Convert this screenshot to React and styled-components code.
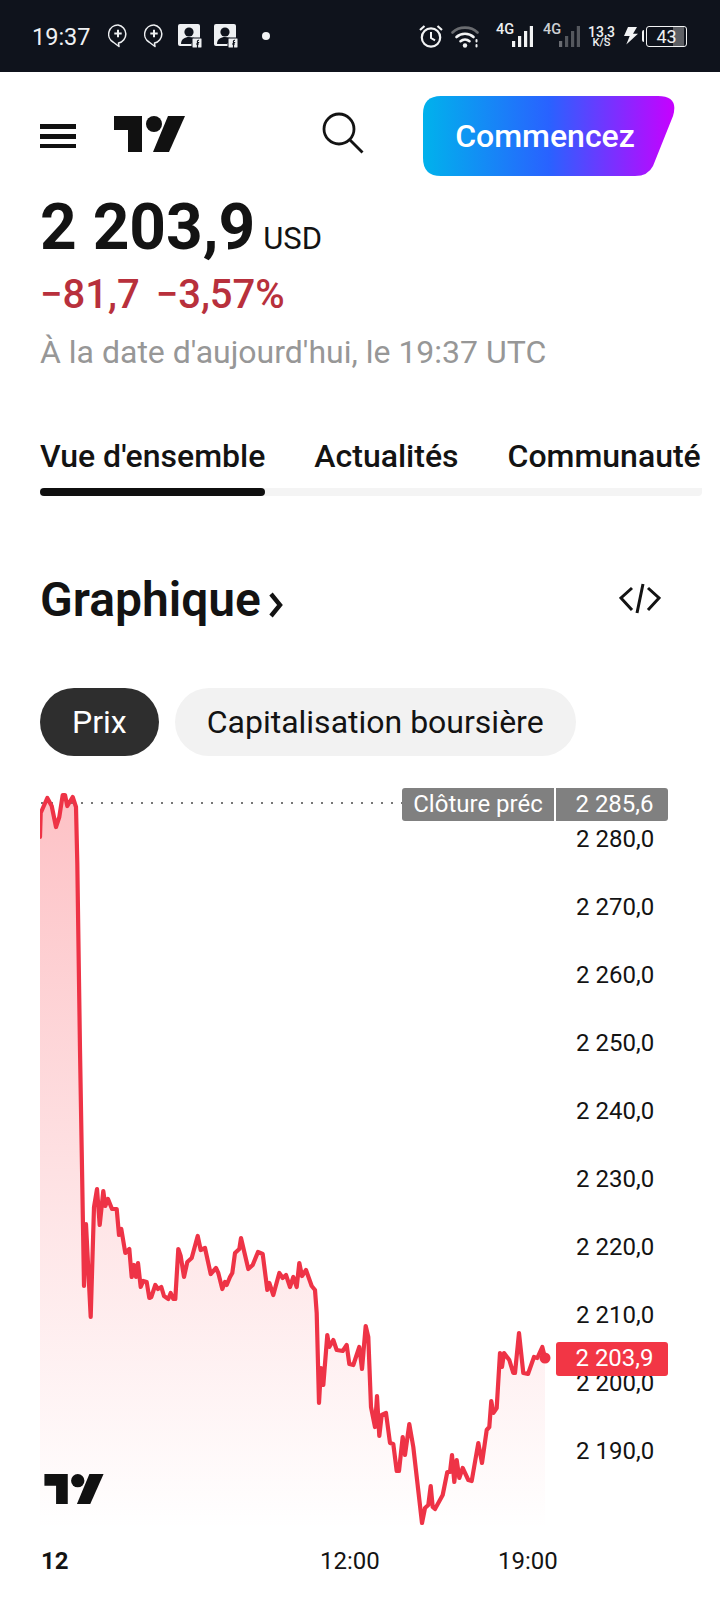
import styled, { createGlobalStyle } from 'styled-components';

const GlobalStyle = createGlobalStyle`
  html, body {
    margin: 0;
    padding: 0;
    background: #fff;
    overflow: hidden;
  }
  body {
    font-family: Roboto, "Liberation Sans", sans-serif;
    color: #131313;
  }
`;

const Page = styled.div`
  width: 720px;
  height: 1611px;
  overflow: hidden;
  background: #fff;
`;

/* status bar */
const StatusBar = styled.div`
  height: 72px;
  box-sizing: border-box;
  padding: 0 33px 0 32px;
  background: #0f131c;
  color: #eef0f2;
  display: flex;
  align-items: center;
  justify-content: space-between;
`;

const StatusGroup = styled.div`
  display: flex;
  align-items: center;
  gap: ${props => props.$gap || 0}px;
  margin-left: ${props => props.$ml || 0}px;
`;

const Time = styled.span`
  font-size: 23.5px;
  line-height: 24px;
  margin-top: 2px;
`;

const NetBlock = styled.div`
  position: relative;
  width: 37px;
  height: 22px;
  display: flex;
  justify-content: flex-end;
  align-items: flex-end;
`;

const NetLabel = styled.span`
  position: absolute;
  left: 0;
  top: -2px;
  font-size: 14.5px;
  line-height: 14px;
  font-weight: 500;
  opacity: ${props => props.$dim ? 0.85 : 1};
`;

const Speed = styled.div`
  width: 27px;
  display: flex;
  flex-direction: column;
  align-items: center;
  font-weight: 500;
  font-size: 14px;
  line-height: 12px;
  white-space: nowrap;
`;

const SpeedUnit = styled.span`
  font-size: 11px;
  line-height: 9px;
`;

const Battery = styled.div`
  position: relative;
  width: 41px;
  height: 21px;
  box-sizing: border-box;
  margin-left: 8px;
  border: 1.5px solid #f2f3f4;
  border-radius: 3px;
  font-size: 18px;
  line-height: 19px;
  text-align: center;
  background: linear-gradient(90deg, transparent 66%, #5d5f64 66%, #5d5f64 94%, transparent 94%);

  &::before {
    content: '';
    position: absolute;
    left: -5px;
    top: 3px;
    width: 2px;
    height: 12px;
    background: #f2f3f4;
    border-radius: 2px 0 0 2px;
  }
`;

/* top navigation */
const Header = styled.header`
  height: 118px;
  box-sizing: border-box;
  padding: 24px 45px 14px 40px;
  display: flex;
  align-items: center;
`;

const MenuIcon = styled.svg`
  width: 36px;
  height: 24px;
  margin-right: 38px;
  flex: none;
`;

const SearchIcon = styled.svg`
  width: 42px;
  height: 42px;
  margin: 0 59px 6px 137px;
  flex: none;
`;

const StartButton = styled.button`
  width: 252px;
  height: 80px;
  flex: none;
  border: 0;
  padding: 0 8px 0 0;
  background: linear-gradient(90deg, #00b2ec 0%, #2962ff 50%, #c800ff 100%);
  clip-path: path('M18 0 H235 Q256 0 250 20 L230 70 Q225 80 212 80 H18 Q0 80 0 62 V18 Q0 0 18 0 Z');
  color: #fff;
  font-family: Roboto, sans-serif;
  font-size: 32px;
  font-weight: 500;
`;

/* price block */
const Quote = styled.section`
  padding: 6px 0 0 40px;
`;

const PriceRow = styled.div`
  display: flex;
  align-items: baseline;
  gap: 8px;
  height: 64px;
  line-height: 64px;
`;

const Price = styled.span`
  font-size: 64px;
  font-weight: 700;
`;

const Currency = styled.span`
  font-size: 31px;
`;

const ChangeRow = styled.div`
  display: flex;
  gap: 16px;
  margin-top: 13px;
  font-size: 40px;
  line-height: 44px;
  font-weight: 500;
  color: #b8303c;
`;

const AsOf = styled.div`
  margin-top: 15px;
  font-size: 32px;
  line-height: 40px;
  color: #979797;
`;

/* tabs */
const TabRow = styled.nav`
  display: flex;
  gap: 49px;
  margin: 64px 18px 0 40px;
  border-bottom: 8px solid #f4f4f4;
  border-radius: 0 4px 4px 0;
`;

const Tab = styled.span`
  position: relative;
  padding-bottom: 12px;
  font-size: 32px;
  line-height: 40px;
  font-weight: 500;
  white-space: nowrap;

  &::after {
    content: '';
    display: ${props => props.$active ? 'block' : 'none'};
    position: absolute;
    left: 0;
    right: 0;
    bottom: -8px;
    height: 8px;
    border-radius: 4px;
    background: #0f0f0f;
  }
`;

/* chart section */
const SectionHead = styled.div`
  display: flex;
  align-items: center;
  margin: 78px 40px 0 40px;
  height: 52px;
`;

const SectionTitle = styled.h2`
  margin: 0;
  font-size: 48px;
  line-height: 52px;
  font-weight: 600;
`;

const TitleChevron = styled.svg`
  width: 16px;
  height: 26px;
  margin: 9px 0 0 7px;
`;

const EmbedIcon = styled.svg`
  width: 42px;
  height: 34px;
  margin-left: auto;
  margin-right: 19px;
  margin-bottom: 2px;
`;

const Pills = styled.div`
  display: flex;
  gap: 16px;
  margin: 62px 0 0 40px;
`;

const Pill = styled.span`
  height: 68px;
  box-sizing: border-box;
  padding: 0 32px;
  border-radius: 34px;
  display: flex;
  align-items: center;
  font-size: 32px;
  color: ${props => props.$active ? '#fff' : '#131313'};
  background: ${props => props.$active ? '#2e2e2e' : '#f2f2f2'};
`;

const Chart = styled.div`
  position: relative;
  margin: 32px 0 0 40px;
  width: 628px;
  display: grid;
  grid-template-columns: 516px 1fr;
`;

const Plot = styled.svg`
  width: 516px;
  height: 750px;
  display: block;
`;

const PriceAxis = styled.div`
  padding: 17px 0 0 20px;
  display: flex;
  flex-direction: column;
`;

const AxisValue = styled.span`
  height: 68px;
  line-height: 68px;
  font-size: 24px;
  white-space: nowrap;
`;

const BadgeRow = styled.div`
  position: absolute;
  top: 0;
  right: 0;
  display: flex;
  gap: 2px;
`;

const Badge = styled.span`
  height: 33px;
  line-height: 32px;
  box-sizing: border-box;
  width: ${props => props.$w}px;
  padding-left: ${props => props.$pad || 0}px;
  text-align: center;
  font-size: 24px;
  color: #fff;
  background: ${props => props.$bg};
  border-radius: ${props => props.$radius || '3px'};
`;

const LastBadge = styled(Badge)`
  position: absolute;
  top: 554px;
  right: 0;
  height: 34px;
`;

const ChartLogo = styled.svg`
  position: absolute;
  left: 4px;
  top: 686px;
  width: 60px;
  height: 30px;
`;

const TimeAxis = styled.div`
  display: grid;
  grid-template-columns: 279px 178px auto;
  margin: 7px 0 0 41px;
  font-size: 24px;
  line-height: 32px;
`;

const TimeLabel = styled.span`
  font-weight: ${props => props.$strong ? 700 : 400};
`;

const LINE = [
  [40, 837], [40.7, 813], [47.3, 798], [51.7, 806], [56, 827], [59.3, 817], [62.7, 795], [65, 795], [67.3, 806], [72.7, 797], [76, 807], [77.3, 863], [80, 1050],
  [81.7, 1150], [84, 1286], [86, 1224], [90.7, 1317], [94, 1207], [97, 1189], [99.7, 1225], [103.3, 1191], [105.3, 1206], [108, 1199], [112, 1209], [116.7, 1209],
  [119, 1235], [121.3, 1229], [125.3, 1253], [129.3, 1249], [131.7, 1277], [134, 1265], [136, 1277], [138, 1263], [140.7, 1287], [143.3, 1281], [146.7, 1282],
  [149.3, 1298], [151.3, 1297], [155.3, 1285], [158, 1289], [161.3, 1287], [164, 1296], [168.3, 1299], [170.7, 1293], [173.3, 1299], [175.3, 1299], [178.3, 1249],
  [180.7, 1256], [184, 1277], [187.3, 1262], [191.7, 1258], [197.7, 1236], [200.7, 1250], [205, 1248], [210.7, 1274], [216, 1268], [218.3, 1273], [222.3, 1289],
  [225, 1282], [226.7, 1285], [230, 1277], [232.3, 1273], [235, 1253], [239.3, 1249], [241, 1238], [248.3, 1269], [252.7, 1265], [258, 1252], [262.7, 1254],
  [267.3, 1290], [269.3, 1283], [273.3, 1295], [279.3, 1273], [282.7, 1278], [286, 1275], [290, 1287], [293.3, 1277], [296.7, 1287], [299.3, 1263], [302, 1276],
  [306, 1270], [311.7, 1286], [315, 1290], [316.7, 1313], [319, 1403], [321, 1368], [323.3, 1385], [327.3, 1335], [329.3, 1347], [333.3, 1340], [336.7, 1350],
  [342.7, 1351], [346.7, 1345], [349.3, 1364], [353.3, 1365], [359.3, 1347], [362, 1369], [365.7, 1326], [368.3, 1337], [371, 1407], [375, 1427], [377, 1396],
  [379.3, 1436], [381.7, 1415], [386, 1413], [390, 1443], [393.3, 1444], [396.7, 1471], [399, 1471], [402.7, 1437], [405, 1455], [409.3, 1424], [413.3, 1447],
  [422, 1523], [425, 1508], [428.3, 1505], [430.7, 1486], [432.7, 1507], [435, 1509], [442.7, 1495], [447.3, 1472], [450, 1472], [452, 1455], [454.3, 1482],
  [456.7, 1460], [459.3, 1478], [462.7, 1468], [468.3, 1480], [471.7, 1481], [478.3, 1443], [482, 1463], [486.7, 1430], [489.3, 1427], [491.3, 1401], [493.3, 1413],
  [496.7, 1408], [500, 1353], [502, 1367], [504, 1353], [509.3, 1360], [513.3, 1373], [515, 1373], [519, 1333], [523.3, 1373], [528, 1374], [534, 1357],
  [537.3, 1358], [542.3, 1347], [545, 1358],
];

const linePoints = LINE.map(p => p.join(',')).join(' ');
const areaPoints = `40,1530 ${linePoints} 545,1530`;

const AXIS = ['2 280,0', '2 270,0', '2 260,0', '2 250,0', '2 240,0', '2 230,0', '2 220,0', '2 210,0', '2 200,0', '2 190,0'];

const TvLogo = (props) => (
  <svg viewBox="0 4 35.5 18" fill="#111" {...props}>
    <path d="M14 22H7V11H0V4h14v18Z" />
    <path d="M27.5 22h-8L27 4h8.5L27.5 22Z" />
    <circle cx="20" cy="8" r="4" />
  </svg>
);

const HeaderLogo = styled(TvLogo)`
  width: 71px;
  height: 36px;
  margin-bottom: 4px;
  flex: none;
`;

const ChatPlus = () => (
  <svg width="20" height="24" viewBox="0 0 20 24" fill="none" stroke="#eef0f2" strokeWidth="1.5">
    <path d="M10 1a9.2 9.2 0 0 0-5 17l6 4.5-.5-3.4A9.2 9.2 0 0 0 10 1Z" strokeLinejoin="round" />
    <path d="M10 5.8v7.4M6.3 9.5h7.4" strokeWidth="2" />
  </svg>
);

const FbContact = () => (
  <svg width="24" height="24" viewBox="0 0 24 24">
    <rect x="0" y="0" width="22" height="22" rx="2" fill="#eef0f2" />
    <circle cx="11" cy="8" r="4.6" fill="#0f131c" />
    <path d="M3 20c0-5 4-7 8-7s6 1 7 2l-5 5Z" fill="#0f131c" />
    <rect x="14" y="14" width="10" height="10" rx="1" fill="#eef0f2" stroke="#0f131c" />
    <path d="M19.5 24v-5.5h1.7M18 20h3M21 16.3c-1.2-.3-1.6.4-1.6 1.6" stroke="#0f131c" strokeWidth="1.2" fill="none" />
  </svg>
);

const Signal = ({ dim }) => {
  const on = dim ? '#55585e' : '#f2f3f4';
  return (
    <svg width="21" height="21" viewBox="0 0 21 21" fill={on}>
      <rect x="0" y="15" width="3.2" height="6" fill="#f2f3f4" opacity={dim ? 0.4 : 1} />
      <rect x="6" y="10" width="3.2" height="11" />
      <rect x="12" y="5" width="3.2" height="16" />
      <rect x="17.8" y="0" width="3.2" height="21" />
    </svg>
  );
};

export default function App() {
  return (
    <Page>
      <GlobalStyle />
      <StatusBar>
        <StatusGroup>
          <Time>19:37</Time>
          <StatusGroup $gap={16} $ml={17}>
            <ChatPlus />
            <ChatPlus />
          </StatusGroup>
          <StatusGroup $gap={12} $ml={14}>
            <FbContact />
            <FbContact />
          </StatusGroup>
          <StatusGroup $ml={24}>
            <svg width="8" height="8" viewBox="0 0 8 8"><circle cx="4" cy="4" r="4" fill="#f2f3f4" /></svg>
          </StatusGroup>
        </StatusGroup>
        <StatusGroup>
          <svg width="24" height="24" viewBox="0 0 24 24" fill="none" stroke="#f2f3f4" strokeWidth="2.2">
            <circle cx="12" cy="13.5" r="9.2" />
            <path d="M12 8v6l4 2.4" strokeWidth="2" />
            <path d="M1 6l4.5-4M23 6l-4.5-4" strokeWidth="2.2" />
          </svg>
          <StatusGroup $ml={8}>
            <svg width="29" height="23" viewBox="0 0 29 23" fill="none" strokeWidth="2.6" strokeLinecap="round">
              <path d="M1.5 7.5C8 1 20 1 26.5 7.5" stroke="#6a6c70" />
              <path d="M5.5 12C10 7.6 18 7.6 22.5 12" stroke="#f2f3f4" />
              <path d="M9.5 16.2c2.6-2.2 6.4-2.2 9 0" stroke="#f2f3f4" />
              <circle cx="14" cy="20.5" r="2.2" fill="#f2f3f4" stroke="none" />
              <path d="M25.5 15v1.5M25.5 20v1.5" stroke="#f2f3f4" strokeWidth="2" />
            </svg>
          </StatusGroup>
          <StatusGroup $ml={16}>
            <NetBlock>
              <NetLabel>4G</NetLabel>
              <Signal />
            </NetBlock>
          </StatusGroup>
          <StatusGroup $ml={10}>
            <NetBlock>
              <NetLabel $dim>4G</NetLabel>
              <Signal dim />
            </NetBlock>
          </StatusGroup>
          <StatusGroup $ml={8}>
            <Speed>
              <span>13,3</span>
              <SpeedUnit>K/S</SpeedUnit>
            </Speed>
          </StatusGroup>
          <StatusGroup $ml={9}>
            <svg width="14" height="18" viewBox="0 0 14 18" fill="#f2f3f4">
              <path d="M4 0h9L9 6.7h5L2.3 17.5 5.7 9H0Z" />
            </svg>
          </StatusGroup>
          <Battery>43</Battery>
        </StatusGroup>
      </StatusBar>

      <Header>
        <MenuIcon viewBox="0 0 36 24" fill="#111">
          <rect y="0" width="36" height="5" />
          <rect y="10" width="36" height="5" />
          <rect y="20" width="36" height="4" />
        </MenuIcon>
        <HeaderLogo />
        <SearchIcon viewBox="0 0 42 42" fill="none" stroke="#131313" strokeWidth="2.8">
          <circle cx="17" cy="17" r="15" />
          <path d="M28 28l12.5 12.5" />
        </SearchIcon>
        <StartButton>Commencez</StartButton>
      </Header>

      <Quote>
        <PriceRow>
          <Price>2 203,9</Price>
          <Currency>USD</Currency>
        </PriceRow>
        <ChangeRow>
          <span>−81,7</span>
          <span>−3,57%</span>
        </ChangeRow>
        <AsOf>À la date d'aujourd'hui, le 19:37 UTC</AsOf>
      </Quote>

      <TabRow>
        <Tab $active>Vue d'ensemble</Tab>
        <Tab>Actualités</Tab>
        <Tab>Communauté</Tab>
      </TabRow>

      <SectionHead>
        <SectionTitle>Graphique</SectionTitle>
        <TitleChevron viewBox="0 0 16 26" fill="none" stroke="#131313" strokeWidth="4.4">
          <path d="M3 2l9 11-9 11" />
        </TitleChevron>
        <EmbedIcon viewBox="0 0 42 34" fill="none" stroke="#131313" strokeWidth="3">
          <path d="M13 6L2 16l11 12M29 6l11 10-11 12M24 2L18 31" />
        </EmbedIcon>
      </SectionHead>

      <Pills>
        <Pill $active>Prix</Pill>
        <Pill>Capitalisation boursière</Pill>
      </Pills>

      <Chart>
        <Plot viewBox="40 788 516 750">
          <defs>
            <linearGradient id="area" gradientUnits="userSpaceOnUse" x1="0" y1="795" x2="0" y2="1530">
              <stop offset="0" stopColor="#f8323f" stopOpacity="0.3" />
              <stop offset="1" stopColor="#f8323f" stopOpacity="0" />
            </linearGradient>
          </defs>
          <line x1="41" y1="803" x2="402" y2="803" stroke="#777" strokeWidth="2" strokeDasharray="2 8" />
          <polygon points={areaPoints} fill="url(#area)" />
          <polyline points={linePoints} fill="none" stroke="#ee3346" strokeWidth="4.2" strokeLinejoin="round" strokeLinecap="round" />
          <circle cx="545" cy="1358" r="5.5" fill="#ee3346" />
        </Plot>
        <PriceAxis>
          {AXIS.map(v => <AxisValue key={v}>{v}</AxisValue>)}
        </PriceAxis>
        <BadgeRow>
          <Badge $w={152} $bg="#808080" $radius="3px 0 0 3px">Clôture préc</Badge>
          <Badge $w={112} $pad={5} $bg="#808080" $radius="0 3px 3px 0">2 285,6</Badge>
        </BadgeRow>
        <LastBadge $w={112} $pad={5} $bg="#f23645">2 203,9</LastBadge>
        <ChartLogo as={TvLogo} />
      </Chart>

      <TimeAxis>
        <TimeLabel $strong>12</TimeLabel>
        <TimeLabel>12:00</TimeLabel>
        <TimeLabel>19:00</TimeLabel>
      </TimeAxis>
    </Page>
  );
}
